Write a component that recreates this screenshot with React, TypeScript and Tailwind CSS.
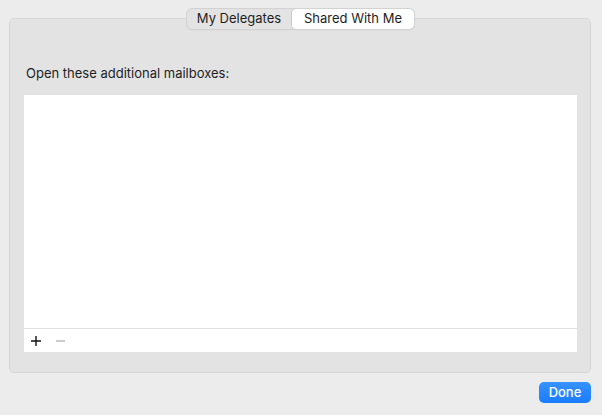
export default function App() {
  return (
    <div
      className="w-[602px] h-[415px] bg-[#ececec] relative flex flex-col text-[13px] text-[#1e1e1e]"
      style={{ fontFamily: "Inter, 'Liberation Sans', sans-serif" }}
    >
      <div className="mt-[18px] ml-[9px] mr-[11px] h-[355px] rounded-[5px] bg-[#e3e3e3] border border-[#d6d6d6] flex flex-col pl-[14px] pr-[13px]">
        <div className="mt-[44px] ml-[2px] h-[20px] leading-[20px]">Open these additional mailboxes:</div>
        <div className="mt-[12px] h-[257px] bg-white flex flex-col">
          <div className="flex-1" />
          <div className="h-[24px] border-t border-[#e0e0e0] flex items-center pl-[6px] gap-[12px]">
            <svg width="12" height="12" viewBox="0 0 12 12">
              <path d="M6 1v10M1 6h10" stroke="#111" strokeWidth="1.4" />
            </svg>
            <svg width="12" height="12" viewBox="0 0 12 12" className="ml-[1px]">
              <path d="M1 6h9" stroke="#b5b5b5" strokeWidth="1.4" />
            </svg>
          </div>
        </div>
      </div>
      <div className="absolute left-[186px] top-[8px] h-[22px] w-[229px] flex rounded-[6px] border border-[#d2d2d2] bg-[#e3e3e3] overflow-hidden shadow-[0_0.5px_0.5px_rgba(0,0,0,0.05)]">
        <div className="w-[104px] flex items-center justify-center">My Delegates</div>
        <div className="flex-1 flex items-center justify-center bg-white rounded-[5px] border border-[#c9c9c9] -my-px -mr-px">Shared With Me</div>
      </div>
      <div className="flex justify-end pr-[11px] mt-[9px]">
        <div className="w-[52px] h-[21px] rounded-[5px] bg-gradient-to-b from-[#3592ff] to-[#1a7cff] text-white font-medium flex items-center justify-center">Done</div>
      </div>
    </div>
  );
}
